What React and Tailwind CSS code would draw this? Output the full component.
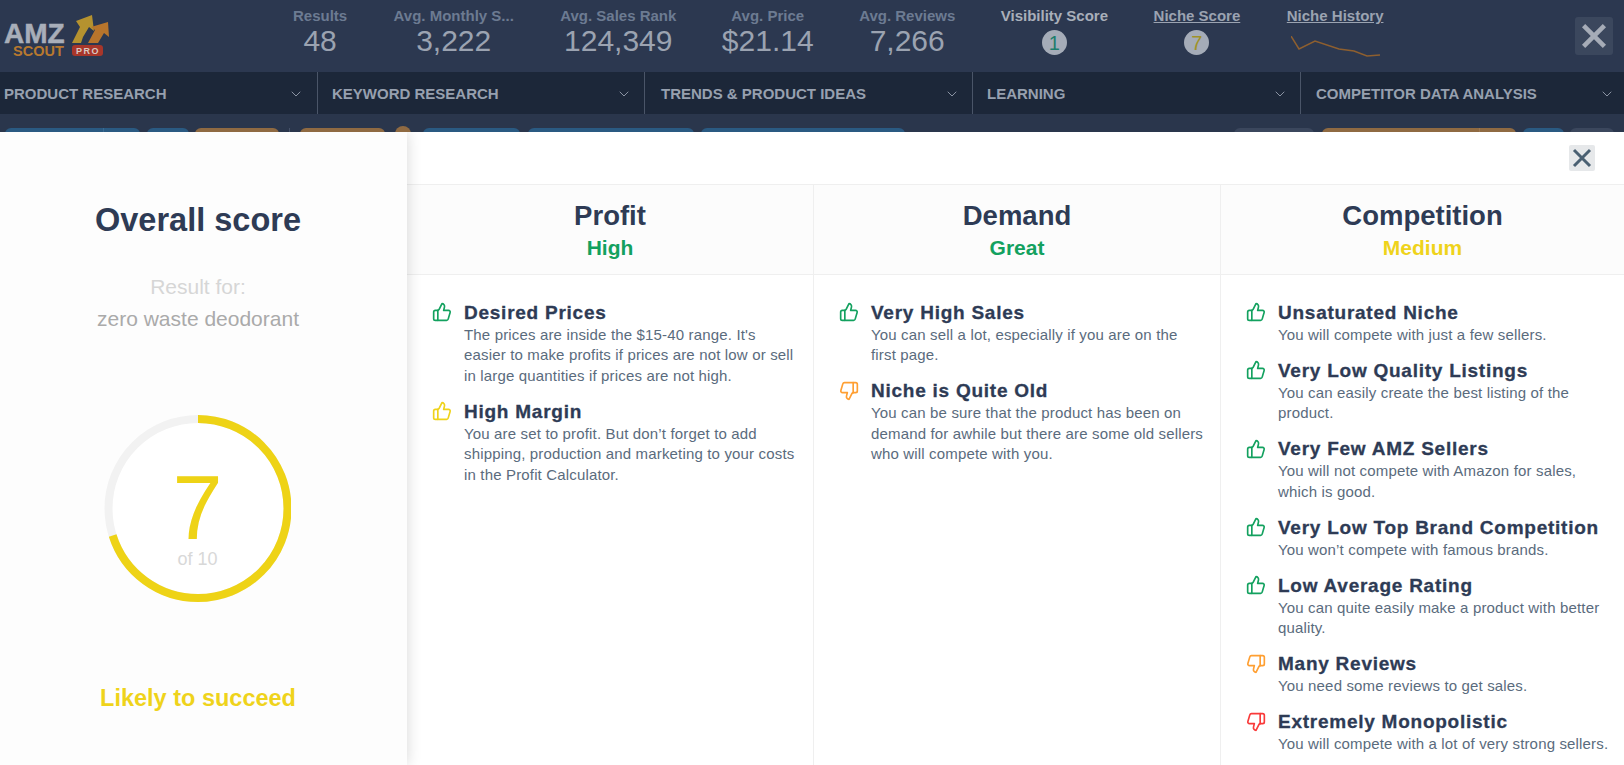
import { ThumbsUp, ThumbsDown, ChevronDown } from 'lucide-react';

const FONT = "font-['Liberation_Sans',Arial,sans-serif]";

const stats = [
  { label: 'Results', value: '48' },
  { label: 'Avg. Monthly S...', value: '3,222', wide: true },
  { label: 'Avg. Sales Rank', value: '124,349' },
  { label: 'Avg. Price', value: '$21.14' },
  { label: 'Avg. Reviews', value: '7,266' },
];

const navItems = [
  { label: 'Product Research', width: 'w-[317px] pl-[4px] pr-[13px]' },
  { label: 'Keyword Research', width: 'w-[327px] pl-[14px] pr-[12px] border-l border-[#4a5568]' },
  { label: 'Trends & Product Ideas', width: 'w-[328px] pl-[16px] pr-[12px] border-l border-[#4a5568]' },
  { label: 'Learning', width: 'w-[328px] pl-[14px] pr-[12px] border-l border-[#4a5568]' },
  { label: 'Competitor Data Analysis', width: 'flex-1 pl-[15px] pr-[9px] border-l border-[#4a5568]' },
];

const columns = [
  {
    title: 'Profit',
    grade: 'High',
    gradeColor: 'text-[#13a15f]',
    items: [
      { icon: 'up', color: 'text-[#13a15f]', title: 'Desired Prices', text: "The prices are inside the $15-40 range. It's easier to make profits if prices are not low or sell in large quantities if prices are not high." },
      { icon: 'up', color: 'text-[#efd31b]', title: 'High Margin', text: 'You are set to profit. But don’t forget to add shipping, production and marketing to your costs in the Profit Calculator.' },
    ],
  },
  {
    title: 'Demand',
    grade: 'Great',
    gradeColor: 'text-[#13a15f]',
    items: [
      { icon: 'up', color: 'text-[#13a15f]', title: 'Very High Sales', text: 'You can sell a lot, especially if you are on the first page.' },
      { icon: 'down', color: 'text-[#ff9f32]', title: 'Niche is Quite Old', text: 'You can be sure that the product has been on demand for awhile but there are some old sellers who will compete with you.' },
    ],
  },
  {
    title: 'Competition',
    grade: 'Medium',
    gradeColor: 'text-[#efd31b]',
    items: [
      { icon: 'up', color: 'text-[#13a15f]', title: 'Unsaturated Niche', text: 'You will compete with just a few sellers.' },
      { icon: 'up', color: 'text-[#13a15f]', title: 'Very Low Quality Listings', text: 'You can easily create the best listing of the product.' },
      { icon: 'up', color: 'text-[#13a15f]', title: 'Very Few AMZ Sellers', text: 'You will not compete with Amazon for sales, which is good.' },
      { icon: 'up', color: 'text-[#13a15f]', title: 'Very Low Top Brand Competition', text: 'You won’t compete with famous brands.' },
      { icon: 'up', color: 'text-[#13a15f]', title: 'Low Average Rating', text: 'You can quite easily make a product with better quality.' },
      { icon: 'down', color: 'text-[#ff9f32]', title: 'Many Reviews', text: 'You need some reviews to get sales.' },
      { icon: 'down', color: 'text-[#f93a3a]', title: 'Extremely Monopolistic', text: 'You will compete with a lot of very strong sellers.' },
    ],
  },
];

function Logo() {
  return (
    <svg width="293" height="72" viewBox="0 0 293 72" className="shrink-0">
      <text x="4" y="43" fontFamily="Liberation Sans" fontWeight="700" fontSize="28" stroke="#a8aeb9" strokeWidth="0.5" fill="#a8aeb9">AMZ</text>
      <text x="13" y="56" fontFamily="Liberation Sans" fontWeight="700" fontSize="14.5" fill="#b8782f">SCOUT</text>
      <rect x="72" y="45" width="31" height="11" rx="3" fill="#a8362a" />
      <text x="76" y="54" fontFamily="Liberation Sans" fontWeight="700" fontSize="9" letterSpacing="1.5" fill="#d9c9c2">PRO</text>
      <polygon points="72,43 80,27 76,21 92,15 94,31 89,27 83,37 81,43" fill="#b5922f" />
      <polygon points="88,43 95,30 91,27 108,22 109,37 104,33 98,43" fill="#b8752c" />
    </svg>
  );
}

function CloseIcon({ size, stroke, color }) {
  return (
    <svg width={size} height={size} viewBox="0 0 20 20">
      <path d="M2 2 18 18M18 2 2 18" stroke={color} strokeWidth={stroke} fill="none" />
    </svg>
  );
}

function Header() {
  return (
    <div className="flex h-[72px] items-start bg-[#2c3850]">
      <Logo />
      <div className="flex items-start gap-[45.5px] pt-[7px]">
        {stats.map((s) => (
          <div key={s.label} className={`flex flex-col items-center ${s.wide ? 'w-[122px]' : ''}`}>
            <div className="text-[15px] leading-[18px] font-bold text-[#6c7b92] whitespace-nowrap">{s.label}</div>
            <div className="text-[30px] leading-[32px] text-[#9ba3b1]">{s.value}</div>
          </div>
        ))}
        <div className="flex flex-col items-center">
          <div className="text-[15px] leading-[18px] font-bold text-[#a9afba] whitespace-nowrap">Visibility Score</div>
          <div className="mt-[5px] flex h-[25px] w-[25px] items-center justify-center rounded-full bg-[#a5acb8] text-[20px] text-[#1d7d6c]">1</div>
        </div>
        <div className="flex flex-col items-center">
          <div className="text-[15px] leading-[18px] font-bold text-[#9ba3b1] underline whitespace-nowrap">Niche Score</div>
          <div className="mt-[5px] flex h-[25px] w-[25px] items-center justify-center rounded-full bg-[#a5acb8] text-[20px] text-[#a09227]">7</div>
        </div>
        <div className="ml-[1px] flex flex-col items-start">
          <div className="text-[15px] leading-[18px] font-bold text-[#9ba3b1] underline whitespace-nowrap">Niche History</div>
          <svg width="90" height="24" viewBox="0 0 90 24" className="ml-[4px] mt-[11px]">
            <polyline points="0,0 8,13 24,5 48,13 63,15 76,20 89,19" fill="none" stroke="#8e5f2f" strokeWidth="1.5" />
          </svg>
        </div>
      </div>
      <button className="ml-auto mr-[11px] mt-[17px] flex h-[38px] w-[38px] items-center justify-center rounded-[3px] bg-[#3b475d]">
        <CloseIcon size={26} stroke={3.5} color="#a6acb7" />
      </button>
    </div>
  );
}

function Nav() {
  return (
    <div className="flex h-[42px] bg-[#1c2739]">
      {navItems.map((n) => (
        <div key={n.label} className={`flex items-center justify-between pt-[2px] ${n.width}`}>
          <span className="text-[15px] font-bold uppercase text-[#97a0af] whitespace-nowrap">{n.label}</span>
          <ChevronDown size={16} strokeWidth={1.5} className="text-[#8a93a3]" />
        </div>
      ))}
    </div>
  );
}

function PillRow() {
  return (
    <div className="flex h-[18px] items-start overflow-hidden bg-[#2a364c] pl-[5px] pr-[10px] pt-[14px]">
      <div className="flex h-[30px] w-[135px] shrink-0 rounded-t-[6px] bg-[#2a5a82]">
        <div className="w-[99px] border-r border-[#3a6a92]" />
      </div>
      <div className="ml-[7px] h-[30px] w-[42px] shrink-0 rounded-t-[6px] bg-[#2a5a82]" />
      <div className="ml-[6px] h-[30px] w-[84px] shrink-0 rounded-t-[6px] bg-[#8f6a42]" />
      <div className="ml-[10px] h-[30px] w-px shrink-0 bg-[#46526a]" />
      <div className="ml-[10px] h-[30px] w-[85px] shrink-0 rounded-t-[6px] bg-[#8f6a42]" />
      <div className="ml-[10px] -mt-[2px] h-[16px] w-[16px] shrink-0 rounded-full bg-[#8f6a42]" />
      <div className="ml-[12px] h-[30px] w-[97px] shrink-0 rounded-t-[6px] bg-[#2a5a82]" />
      <div className="ml-[8px] h-[30px] w-[166px] shrink-0 rounded-t-[6px] bg-[#2a5a82]" />
      <div className="ml-[7px] h-[30px] w-[204px] shrink-0 rounded-t-[6px] bg-[#2a5a82]" />
      <div className="ml-auto h-[30px] w-[80px] shrink-0 rounded-t-[6px] bg-[#3b475d]" />
      <div className="ml-[8px] flex h-[30px] w-[194px] shrink-0 justify-end rounded-t-[6px] bg-[#8f6a42]">
        <div className="w-[37px] border-l border-[#9c7750]" />
      </div>
      <div className="ml-[7px] h-[30px] w-[41px] shrink-0 rounded-t-[6px] bg-[#2a5a82]" />
      <div className="ml-[6px] h-[30px] w-[44px] shrink-0 rounded-t-[6px] bg-[#3b475d]" />
    </div>
  );
}

function ScoreRing() {
  const r = 89.5;
  const c = 2 * Math.PI * r;
  return (
    <div className="relative -ml-[1px] h-[187px] w-[187px]">
      <svg width="187" height="187" viewBox="0 0 187 187">
        <circle cx="94" cy="93.5" r={r} fill="#ffffff" stroke="#f2f2f2" strokeWidth="8" />
        <circle
          cx="94"
          cy="93.5"
          r={r}
          fill="none"
          stroke="#eed316"
          strokeWidth="8"
          strokeDasharray={`${c * 0.7} ${c}`}
          transform="rotate(-90 94 93.5)"
        />
      </svg>
      <div className="absolute inset-0 flex flex-col items-center pt-[57px]">
        <div className="text-[90px] leading-[72px] text-[#eed316]">7</div>
        <div className="mt-[5px] text-[18px] leading-[20px] text-[#d8d8d8]">of 10</div>
      </div>
    </div>
  );
}

function ScorePanel() {
  return (
    <div className="relative z-10 flex h-full w-[407px] shrink-0 flex-col items-center bg-[#fdfdfd] pr-[11px] shadow-[0_0_14px_rgba(0,0,0,0.16)]">
      <h2 className="mt-[68px] shrink-0 text-[32.5px] leading-[40px] font-bold text-[#2e3b55]">Overall score</h2>
      <div className="mt-[31px] shrink-0 text-[21px] leading-[32px] text-[#d6d6d6]">Result for:</div>
      <div className="shrink-0 text-[21px] leading-[32px] text-[#aaaaaa]">zero waste deodorant</div>
      <div className="mt-[80px] shrink-0">
        <ScoreRing />
      </div>
      <div className="mt-[82px] shrink-0 text-[23.5px] leading-[28px] font-bold text-[#efd31b]">Likely to succeed</div>
    </div>
  );
}

function Item({ item }) {
  const Icon = item.icon === 'up' ? ThumbsUp : ThumbsDown;
  return (
    <div className="mb-[13.5px] flex">
      <Icon size={20} strokeWidth={2} className={`ml-[25px] mt-[1.5px] w-[20px] shrink-0 ${item.color}`} />
      <div className="ml-[12px] w-[333px]">
        <div className="text-[19px] leading-[24px] font-bold tracking-[0.75px] text-[#2e3b55] whitespace-nowrap [-webkit-text-stroke:0.3px_#2e3b55]">{item.title}</div>
        <p className="text-[15px] leading-[20.5px] tracking-[0.16px] text-[#5a6b7d]">{item.text}</p>
      </div>
    </div>
  );
}

function Column({ col, last }) {
  return (
    <div className={`flex flex-col ${last ? '' : 'border-r border-[#efefef]'}`}>
      <div className="flex h-[91px] shrink-0 flex-col items-center border-y border-[#efefef] bg-[#fcfcfc] pt-[15px]">
        <div className="text-[27.5px] leading-[32px] font-bold text-[#2e3b55]">{col.title}</div>
        <div className={`mt-[3px] text-[21px] leading-[26px] font-bold ${col.gradeColor}`}>{col.grade}</div>
      </div>
      <div className="pt-[25.5px]">
        {col.items.map((it) => (
          <Item key={it.title} item={it} />
        ))}
      </div>
    </div>
  );
}

function Modal() {
  return (
    <div className="absolute inset-x-0 bottom-0 top-[132px] flex overflow-hidden bg-white">
      <ScorePanel />
      <div className="flex min-w-0 flex-1 flex-col">
        <div className="flex h-[52px] shrink-0 items-start justify-end pr-[29px] pt-[13px]">
          <button className="flex h-[26px] w-[26px] items-center justify-center rounded-[2px] bg-[#e6e8ea]">
            <CloseIcon size={20} stroke={3} color="#4a6072" />
          </button>
        </div>
        <div className="grid flex-1 grid-cols-[407px_407px_1fr]">
          {columns.map((c, i) => (
            <Column key={c.title} col={c} last={i === 2} />
          ))}
        </div>
      </div>
    </div>
  );
}

export default function App() {
  return (
    <div className={`relative h-screen w-full overflow-hidden bg-white ${FONT}`}>
      <Header />
      <Nav />
      <PillRow />
      <Modal />
    </div>
  );
}
